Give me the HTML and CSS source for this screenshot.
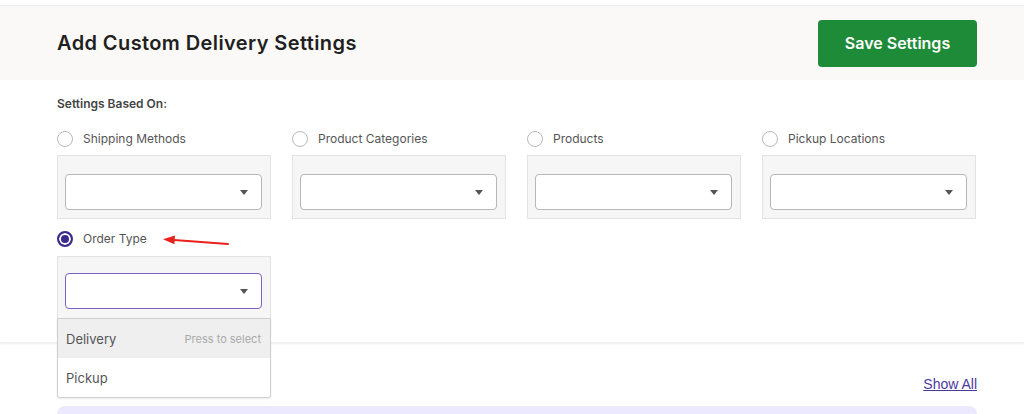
FILE: index.html
```html
<!DOCTYPE html>
<html>
<head>
<meta charset="utf-8">
<link rel="stylesheet" href="styles.css">
</head>
<body>
<div class="topbar"></div>
<header class="header">
  <h1 class="title">Add Custom Delivery Settings</h1>
  <button class="save-btn">Save Settings</button>
</header>
<section class="card">
  <div class="section-label">Settings Based On:</div>
  <div class="options">
    <div class="option">
      <label class="radio-row"><span class="radio"></span><span class="radio-label">Shipping Methods</span></label>
      <div class="box"><div class="select"><span class="caret"></span></div></div>
    </div>
    <div class="option">
      <label class="radio-row"><span class="radio"></span><span class="radio-label">Product Categories</span></label>
      <div class="box"><div class="select"><span class="caret"></span></div></div>
    </div>
    <div class="option">
      <label class="radio-row"><span class="radio"></span><span class="radio-label">Products</span></label>
      <div class="box"><div class="select"><span class="caret"></span></div></div>
    </div>
    <div class="option">
      <label class="radio-row"><span class="radio"></span><span class="radio-label">Pickup Locations</span></label>
      <div class="box"><div class="select"><span class="caret"></span></div></div>
    </div>
    <div class="option option-open">
      <label class="radio-row"><span class="radio radio-checked"></span><span class="radio-label">Order Type</span>
        <svg class="annot-arrow" width="68" height="12" viewBox="0 0 68 12"><path d="M66 9 L12 5" stroke="#e8211d" stroke-width="2" fill="none" stroke-linecap="round"/><path d="M1 4.3 L13 0.6 L12.4 9.2 Z" fill="#e8211d"/></svg>
      </label>
      <div class="box box-open">
        <div class="select select-focus"><span class="caret"></span></div>
        <ul class="menu">
          <li class="menu-item menu-item-active"><span>Delivery</span><span class="hint">Press to select</span></li>
          <li class="menu-item"><span>Pickup</span></li>
        </ul>
      </div>
    </div>
  </div>
</section>
<section class="lower">
  <div class="lower-head"><a class="show-all" href="#">Show All</a></div>
  <div class="notice"></div>
</section>
</body>
</html>
```
FILE: styles.css
```css
* { box-sizing: border-box; }
html, body { margin: 0; padding: 0; }
body {
  background: #fff;
  font-family: Inter, "Noto Sans", Arial, sans-serif;
  color: #333;
  width: 1024px;
  height: 414px;
  overflow: hidden;
}
.topbar {
  height: 6px;
  background: #fff;
  border-bottom: 1px solid #ececec;
}
.header {
  height: 74px;
  background: #faf9f7;
  display: flex;
  align-items: center;
  justify-content: space-between;
  padding: 0 47px 0 57px;
}
.title {
  margin: 0;
  font-size: 20px;
  font-weight: 600;
  color: #1f1f1f;
  letter-spacing: 0.4px;
}
.save-btn {
  width: 159px;
  height: 47px;
  border: 0;
  border-radius: 4px;
  background: #1d8b37;
  color: #fff;
  font-family: Inter, "Noto Sans", Arial, sans-serif;
  font-size: 16px;
  font-weight: 600;
}
.card {
  background: #fff;
  padding: 16px 47px 0 57px;
  height: 263px;
  box-shadow: 0 1px 2px rgba(0,0,0,0.07);
  border-bottom: 1px solid #f0f0f0;
  position: relative;
  z-index: 1;
}
.section-label {
  font-size: 12px;
  font-weight: 600;
  color: #444;
  line-height: 16px;
}
.options {
  margin-top: 19px;
  display: grid;
  grid-template-columns: repeat(4, 214px);
  column-gap: 21px;
  row-gap: 12px;
}
.option { position: relative; }
.radio-row {
  display: flex;
  align-items: center;
  height: 16px;
  gap: 10px;
  position: relative;
}
.radio {
  width: 16px;
  height: 16px;
  border-radius: 50%;
  border: 1px solid #b9b9b9;
  background: #fff;
  flex: none;
}
.radio-checked {
  border: 2px solid #3a2a8c;
  background: #3a2a8c;
  box-shadow: inset 0 0 0 2px #fff;
}
.radio-label {
  font-size: 12px;
  color: #555;
  line-height: 16px;
}
.annot-arrow {
  position: absolute;
  left: 105px;
  top: 4px;
}
.box {
  margin-top: 8px;
  height: 64px;
  background: #f6f6f6;
  border: 1px solid #e3e3e3;
  padding: 18px 8px 0 7px;
}
.option-open .box { margin-top: 9px; height: 63px; position: relative; padding-top: 16px; }
.select {
  height: 36px;
  background: #fff;
  border: 1px solid #b7b7b7;
  border-radius: 4px;
  position: relative;
}
.select-focus { border-color: #7a62c7; }
.caret {
  position: absolute;
  right: 13px;
  top: 15px;
  width: 0;
  height: 0;
  border-left: 4.5px solid transparent;
  border-right: 4.5px solid transparent;
  border-top: 5px solid #555;
}
.menu {
  position: absolute;
  left: -1px;
  right: -1px;
  top: 61px;
  margin: 0;
  padding: 0;
  list-style: none;
  background: #fff;
  border: 1px solid #cfcfcf;
  border-radius: 0 0 3px 3px;
  box-shadow: 0 1px 2px rgba(0,0,0,0.08);
}
.menu-item {
  height: 39px;
  display: flex;
  align-items: center;
  justify-content: space-between;
  padding: 0 9px 0 8px;
  font-size: 13px;
  color: #555;
}
.menu-item-active { background: #efefef; }
.hint { font-size: 11px; color: #aaa; }
.lower {
  padding: 0 47px 0 57px;
}
.lower-head {
  height: 63px;
  display: flex;
  justify-content: flex-end;
  align-items: flex-end;
  padding-bottom: 14px;
}
.show-all {
  font-family: "Liberation Sans", Arial, sans-serif;
  font-size: 14px;
  color: #4a3a9e;
  text-decoration: underline;
}
.notice {
  height: 8px;
  background: #ece8fd;
  border-radius: 8px 8px 0 0;
}
```
